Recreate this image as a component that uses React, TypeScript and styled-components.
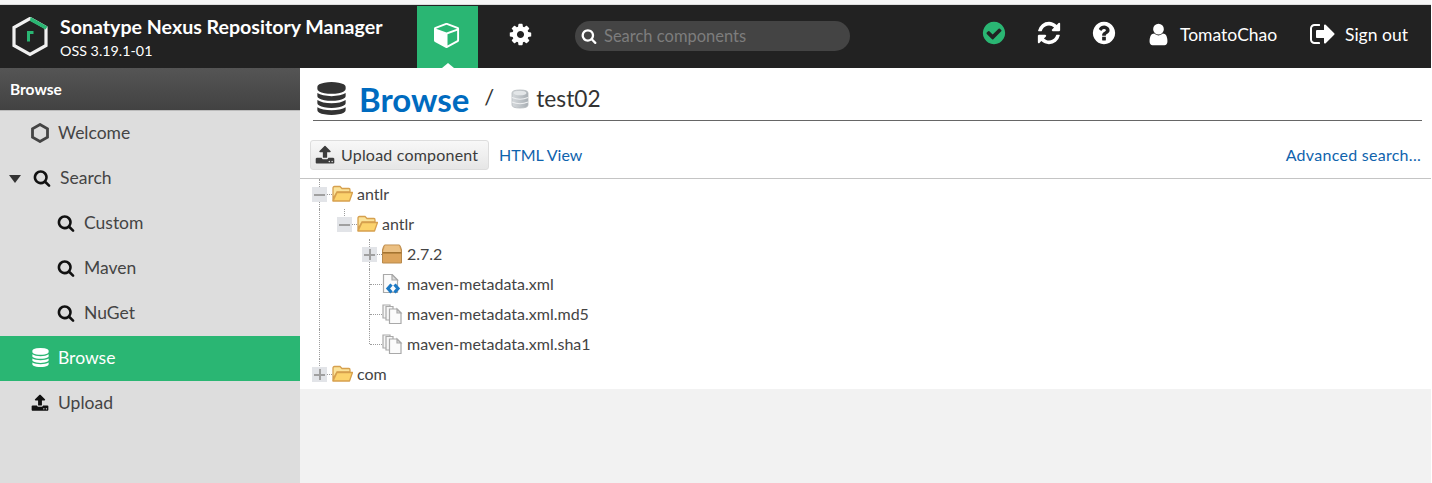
import React from 'react';
import styled, { createGlobalStyle } from 'styled-components';

const GlobalStyle = createGlobalStyle`
  html, body {
    margin: 0;
    padding: 0;
    background: #fff;
    font-family: Lato, "Open Sans", "Liberation Sans", sans-serif;
  }
`;

// glyph outlines of the icon font used by the original page
const paths = {
  search:
    'M1216 832q0-185-131.500-316.500t-316.500-131.500-316.500 131.500-131.500 316.500 131.500 316.500 316.500 131.500 316.500-131.500 131.500-316.500zm512 832q0 52-38 90t-90 38q-54 0-90-38l-343-342q-179 124-399 124-143 0-273.500-55.500t-225-150-150-225-55.500-273.500 55.500-273.500 150-225 225-150 273.500-55.500 273.500 55.500 225 150 150 225 55.500 273.500q0 220-124 399l343 343q37 37 37 90z',
  database:
    'M896 768q237 0 443-43t325-127v170q0 69-103 128t-280 93.500-385 34.500-385-34.500-280-93.500-103-128v-170q119 84 325 127t443 43zm0 768q237 0 443-43t325-127v170q0 69-103 128t-280 93.500-385 34.500-385-34.500-280-93.500-103-128v-170q119 84 325 127t443 43zm0-384q237 0 443-43t325-127v170q0 69-103 128t-280 93.500-385 34.500-385-34.500-280-93.500-103-128v-170q119 84 325 127t443 43zm0-1152q208 0 385 34.500t280 93.500 103 128v128q0 69-103 128t-280 93.500-385 34.500-385-34.500-280-93.500-103-128v-128q0-69 103-128t280-93.500 385-34.500z',
  upload:
    'M1344 1472q0-26-19-45t-45-19-45 19-19 45 19 45 45 19 45-19 19-45zm256 0q0-26-19-45t-45-19-45 19-19 45 19 45 45 19 45-19 19-45zm128-224v320q0 40-28 68t-68 28h-1472q-40 0-68-28t-28-68v-320q0-40 28-68t68-28h427q21 56 70.500 92t110.500 36h256q61 0 110.500-36t70.500-92h427q40 0 68 28t28 68zm-325-648q-17 40-59 40h-256v448q0 26-19 45t-45 19h-256q-26 0-45-19t-19-45v-448h-256q-42 0-59-40-17-39 14-69l448-448q18-19 45-19t45 19l448 448q31 30 14 69z',
  cube:
    'M896 1629l640-349v-636l-640 233v752zm-64-865l698-254-698-254-698 254zm832-252v768q0 35-18 65t-49 47l-704 384q-28 16-61 16t-61-16l-704-384q-31-17-49-47t-18-65v-768q0-40 23-73t61-47l704-256q22-8 44-8t44 8l704 256q38 14 61 47t23 73z',
  cog:
    'M1152 896q0-106-75-181t-181-75-181 75-75 181 75 181 181 75 181-75 75-181zm512-109v222q0 12-8 23t-20 13l-185 28q-19 54-39 91 35 50 107 138 10 12 10 25t-9 23q-27 37-99 108t-94 71q-12 0-26-9l-138-108q-44 23-91 38-16 136-29 186-7 28-36 28h-222q-14 0-24.500-8.500t-11.500-21.500l-28-184q-49-16-90-37l-141 107q-10 9-25 9-14 0-25-11-126-114-165-168-7-10-7-23 0-12 8-23 15-21 51-66.500t54-70.500q-27-50-41-99l-183-27q-13-2-21-12.500t-8-23.500v-222q0-12 8-23t19-13l186-28q14-46 39-92-40-57-107-138-10-12-10-24 0-10 9-23 26-36 98.500-107.500t94.500-71.500q13 0 26 10l138 107q44-23 91-38 16-136 29-186 7-28 36-28h222q14 0 24.500 8.500t11.500 21.500l28 184q49 16 90 37l142-107q9-9 24-9 13 0 25 10 129 119 165 170 7 8 7 22 0 12-8 23-15 21-51 66.500t-54 70.500q26 50 41 98l183 28q13 2 21 12.500t8 23.500z',
  check:
    'M1412 734q0-28-18-46l-91-90q-19-19-45-19t-45 19l-408 407-226-226q-19-19-45-19t-45 19l-91 90q-18 18-18 46 0 27 18 45l362 362q19 19 45 19 27 0 46-19l543-543q18-18 18-45zm252 162q0 209-103 385.500t-279.500 279.500-385.500 103-385.500-103-279.500-279.500-103-385.500 103-385.500 279.500-279.500 385.500-103 385.500 103 279.500 279.500 103 385.500z',
  refresh:
    'M1639 1056q0 5-1 7-64 268-268 434.500t-478 166.500q-146 0-282.500-55t-243.500-157l-129 129q-19 19-45 19t-45-19-19-45v-448q0-26 19-45t45-19h448q26 0 45 19t19 45-19 45l-137 137q71 66 161 102t187 36q134 0 250-65t186-179q11-17 53-117 8-23 30-23h192q13 0 22.500 9.500t9.500 22.500zm25-800v448q0 26-19 45t-45 19h-448q-26 0-45-19t-19-45 19-45l138-138q-148-137-349-137-134 0-250 65t-186 179q-11 17-53 117-8 23-30 23h-199q-13 0-22.500-9.500t-9.500-22.500v-7q65-268 270-434.500t480-166.500q146 0 284 55.500t245 156.500l130-129q19-19 45-19t45 19 19 45z',
  question:
    'M1024 1376v-192q0-14-9-23t-23-9h-192q-14 0-23 9t-9 23v192q0 14 9 23t23 9h192q14 0 23-9t9-23zm256-672q0-88-55.500-163t-138.500-116-170-41q-243 0-371 213-15 24 8 42l132 100q7 6 19 6 16 0 25-12 53-68 86-92 34-24 86-24 48 0 85.500 26t37.500 59q0 38-20 61t-68 45q-63 28-115.500 86.500t-52.500 125.500v36q0 14 9 23t23 9h192q14 0 23-9t9-23q0-19 21.500-49.500t54.500-49.500q32-18 49-28.500t46-35 44.500-48 28-60.500 12.500-81zm384 192q0 209-103 385.500t-279.500 279.500-385.500 103-385.500-103-279.500-279.500-103-385.500 103-385.500 279.500-279.500 385.500-103 385.500 103 279.500 279.500 103 385.500z',
  user:
    'M1536 1399q0 109-62.500 187t-150.500 78h-854q-88 0-150.500-78t-62.500-187q0-85 8.500-160.500t31.500-152 58.500-131 94-89 134.500-34.500q131 128 313 128t313-128q76 0 134.500 34.500t94 89 58.500 131 31.500 152 8.500 160.500zm-256-887q0 159-112.500 271.500t-271.500 112.500-271.500-112.500-112.500-271.500 112.500-271.500 271.500-112.500 271.500 112.500 112.500 271.500z',
  signOut:
    'M704 1440q0 4 1 20t.5 26.500-3 23.500-10 19.500-20.500 6.500h-320q-119 0-203.500-84.500t-84.500-203.500v-704q0-119 84.500-203.500t203.500-84.500h320q13 0 22.500 9.500t9.500 22.500q0 4 1 20t.5 26.500-3 23.500-10 19.500-20.500 6.500h-320q-66 0-113 47t-47 113v704q0 66 47 113t113 47h288l11.500 1 11.500 3 8 5.500 7 9 2 13.500zm928-544q0 26-19 45l-544 544q-19 19-45 19t-45-19-19-45v-288h-448q-26 0-45-19t-19-45v-384q0-26 19-45t45-19h448v-288q0-26 19-45t45-19 45 19l544 544q19 19 19 45z',
};

const Glyph = ({ name, size }: { name: keyof typeof paths; size: number }) => (
  <svg width={size} height={size} viewBox="0 0 1792 1792" fill="currentColor" style={{ flexShrink: 0 }}>
    <path d={paths[name]} />
  </svg>
);

const Page = styled.div`
  width: 1431px;
  height: 483px;
  display: flex;
  flex-direction: column;
  overflow: hidden;
`;

const TopStrip = styled.div`
  height: 5px;
  box-sizing: border-box;
  background: #f6f6f6;
  border-bottom: 1px solid #dddddd;
`;

const Header = styled.header`
  height: 63px;
  background: #222222;
  display: flex;
  align-items: stretch;
  color: #fff;
`;

const Brand = styled.div`
  width: 417px;
  display: flex;
  align-items: center;
  padding-left: 11px;
  box-sizing: border-box;
  gap: 11px;
`;

const BrandText = styled.div`
  display: flex;
  flex-direction: column;
  gap: 4px;
`;

const BrandTitle = styled.div`
  font-size: 19.6px;
  line-height: 24px;
  font-weight: 700;
  white-space: nowrap;
`;

const BrandVersion = styled.div`
  font-size: 14.3px;
  line-height: 16px;
`;

const TabButton = styled.div<{ $active?: boolean; $width: number }>`
  position: relative;
  width: ${(p) => p.$width}px;
  margin-top: 1px;
  display: flex;
  align-items: center;
  justify-content: center;
  padding-bottom: 5px;
  box-sizing: border-box;
  background: ${(p) => (p.$active ? '#2ab673' : 'transparent')};
  ${(p) =>
    p.$active &&
    `&::after {
      content: '';
      position: absolute;
      left: 50%;
      bottom: 0;
      margin-left: -6px;
      border-left: 6px solid transparent;
      border-right: 6px solid transparent;
      border-bottom: 5px solid #fff;
    }`}
`;

const SearchBox = styled.div`
  width: 275px;
  height: 30px;
  margin: 16px 0 0 13px;
  border-radius: 15px;
  background: #444444;
  display: flex;
  align-items: center;
  gap: 7px;
  padding-left: 6px;
  box-sizing: border-box;
  color: #fff;
`;

const SearchPlaceholder = styled.span`
  font-size: 16.5px;
  color: #7d7d7d;
`;

const HeaderRight = styled.div`
  margin-left: auto;
  display: flex;
  align-items: center;
  padding: 0 22px 5px 0;
  font-size: 17.5px;
`;

const HeaderIcon = styled.span<{ $color?: string }>`
  width: 55px;
  margin-bottom: 2px;
  display: flex;
  justify-content: center;
  color: ${(p) => p.$color ?? '#fff'};
`;

const HeaderLink = styled.span<{ $width: number; $gap: number; $offset?: number }>`
  width: ${(p) => p.$width}px;
  margin-left: ${(p) => p.$offset ?? 0}px;
  display: flex;
  align-items: center;
  gap: ${(p) => p.$gap}px;
  white-space: nowrap;
`;

const Body = styled.div`
  flex: 1;
  display: flex;
  min-height: 0;
`;

const Sidebar = styled.aside`
  width: 300px;
  background: #dddddd;
  flex-shrink: 0;
`;

const SidebarTitle = styled.div`
  height: 43px;
  box-sizing: border-box;
  background: linear-gradient(#555555, #424242);
  border-bottom: 1px solid #bbbbbb;
  color: #fff;
  font-size: 15.5px;
  font-weight: 700;
  display: flex;
  align-items: center;
  padding-left: 10px;
`;

const NavItem = styled.div<{ $indent: number; $active?: boolean }>`
  height: 45px;
  box-sizing: border-box;
  display: flex;
  align-items: center;
  padding: 0 0 2px ${(p) => p.$indent}px;
  font-size: 17.5px;
  color: ${(p) => (p.$active ? '#fff' : '#444')};
  background: ${(p) => (p.$active ? '#2ab673' : 'transparent')};
`;

const NavIcon = styled.span<{ $color?: string }>`
  width: 27px;
  display: flex;
  color: ${(p) => p.$color ?? '#111'};
`;

const Caret = styled.span`
  width: 0;
  height: 0;
  margin: 2px 12px 0 0;
  border-left: 6px solid transparent;
  border-right: 6px solid transparent;
  border-top: 8px solid #333;
`;

const Main = styled.main`
  flex: 1;
  display: flex;
  flex-direction: column;
  min-width: 0;
`;

const TitleBar = styled.div`
  background: #fff;
  height: 53px;
  padding: 0 9px 0 13px;
  display: flex;
`;

const TitleInner = styled.div`
  flex: 1;
  display: flex;
  align-items: center;
  box-sizing: border-box;
  padding: 9px 0 0 2px;
  border-bottom: 1px solid #666;
  color: #333;
`;

const TitleText = styled.h1`
  margin: 0 0 0 11px;
  font-size: 33px;
  font-weight: 700;
  color: #006bbf;
`;

const Slash = styled.span`
  margin: 0 17px 4px 15px;
  font-size: 22px;
  color: #333;
`;

const Crumb = styled.span`
  margin-left: 7px;
  font-size: 22.7px;
  color: #333;
`;

const Toolbar = styled.div`
  background: #fff;
  height: 58px;
  box-sizing: border-box;
  border-bottom: 1px solid #c4c4c4;
  padding: 10px 10px 0;
  display: flex;
  align-items: center;
`;

const ToolButton = styled.div`
  height: 30px;
  width: 179px;
  box-sizing: border-box;
  border: 1px solid #dddddd;
  border-radius: 3px;
  background: linear-gradient(#f8f8f8, #e6e6e6);
  display: flex;
  align-items: center;
  padding-left: 4px;
  gap: 6px;
  font-size: 16px;
  letter-spacing: 0.2px;
  color: #3c3c3c;
`;

const ToolLink = styled.a<{ $right?: boolean }>`
  font-size: 16px;
  color: #0f63ad;
  margin-left: ${(p) => (p.$right ? 'auto' : '10px')};
  letter-spacing: ${(p) => (p.$right ? '0.28px' : '0')};
`;

const Tree = styled.div`
  background: #fff;
  display: flex;
  flex-direction: column;
`;

const TreeRow = styled.div`
  height: 30px;
  display: flex;
  align-items: center;
  padding-left: 7px;
  font-size: 16px;
  color: #444;
`;

const TreeLabel = styled.span`
  margin-bottom: 2px;
`;

const lineColor = '#9c9c9c';

const Elbow = styled.span<{ $kind: 'blank' | 'line' | 'tee' | 'end' }>`
  position: relative;
  width: 25px;
  height: 30px;
  flex-shrink: 0;
  ${(p) =>
    p.$kind !== 'blank' &&
    `&::before {
      content: '';
      position: absolute;
      left: 12px;
      top: 0;
      height: ${p.$kind === 'end' ? '15px' : '30px'};
      border-left: 1px dotted ${lineColor};
    }`}
  ${(p) =>
    (p.$kind === 'tee' || p.$kind === 'end') &&
    `&::after {
      content: '';
      position: absolute;
      left: 13px;
      top: 15px;
      width: 12px;
      border-top: 1px dotted ${lineColor};
    }`}
`;

const Expander = styled.span<{ $open: boolean }>`
  position: absolute;
  z-index: 1;
  left: 5px;
  top: 8px;
  width: 15px;
  height: 15px;
  background: #e2e4e8;
  &::before {
    content: '';
    position: absolute;
    left: 2px;
    top: 6.5px;
    width: 11px;
    height: 2px;
    background: #a0a0a0;
  }
  ${(p) =>
    !p.$open &&
    `&::after {
      content: '';
      position: absolute;
      left: 6.5px;
      top: 2px;
      width: 2px;
      height: 11px;
      background: #a0a0a0;
    }`}
`;

const RowIcon = styled.span`
  width: 25px;
  height: 22px;
  flex-shrink: 0;
  display: flex;
  align-items: center;
`;

const Spacer = styled.div`
  flex: 1;
  background: #f2f2f2;
`;

const LogoIcon = () => (
  <svg width="38" height="40" viewBox="0 0 38 40">
    <path d="M19 1.5 L35 10.5 V28.500 L19 37.500 L3 28.500 V10.500 Z" fill="none" stroke="#f0f0f0" strokeWidth="3.2" />
    <path d="M19.500 0 L36.500 9.500 L34.500 12.500 L19 4 Z" fill="#2ab673" />
    <path d="M16 24.500 V14 H22.500 V17 H19 V24.500 Z" fill="#2ab673" />
  </svg>
);

const HexIcon = () => (
  <svg width="18" height="20" viewBox="0 0 18 20">
    <path d="M9 1.500 L16.500 5.700 V14.300 L9 18.500 L1.500 14.300 V5.700 Z" fill="none" stroke="#444" strokeWidth="2.800" />
  </svg>
);

const FolderIcon = () => (
  <svg width="21" height="18" viewBox="0 0 21 18">
    <path d="M1 3 Q1 1.500 2.500 1.500 H8 L10 3.500 H17 Q18 3.500 18 5 V7 H5 L1 14 Z" fill="#fbe39a" stroke="#d6a04e" strokeWidth="1.300" />
    <path d="M1 16 L5 7.500 H20.500 L17.500 16 Z" fill="#fcd36c" stroke="#d6a04e" strokeWidth="1.300" strokeLinejoin="round" />
  </svg>
);

const BoxIcon = () => (
  <svg width="20" height="20" viewBox="0 0 20 20">
    <path d="M3 1 H17 Q18 1 18.500 2.500 L19.500 6 V19 H0.500 V6 L1.500 2.500 Q2 1 3 1 Z" fill="#dca45c" stroke="#b98a4c" />
    <path d="M3 1.500 H17 L19 8 H1 Z" fill="#ebc083" />
    <path d="M0.500 8.800 H19.500" stroke="#a0712f" strokeWidth="1.500" />
  </svg>
);

const XmlIcon = () => (
  <svg width="21" height="20" viewBox="0 0 21 20">
    <path d="M1.500 0.500 H10 L15.500 6 V18.500 H1.500 Z" fill="#fbfbfb" stroke="#a9a9a9" strokeWidth="1.200" />
    <path d="M10 0.500 V6 H15.500 Z" fill="#dcdcdc" stroke="#a9a9a9" strokeWidth="1.200" />
    <path d="M9.500 10.500 L6 14.500 L9.500 18.500 M12.500 10.500 L16 14.500 L12.500 18.500" fill="none" stroke="#1c79c4" strokeWidth="3.200" />
  </svg>
);

const FilesIcon = () => (
  <svg width="21" height="20" viewBox="0 0 21 20">
    <path d="M1 1 H8 V14 H1 Z" fill="#f6f6f6" stroke="#a9a9a9" strokeWidth="1.200" />
    <path d="M4 2.500 H11 V16 H4 Z" fill="#f6f6f6" stroke="#a9a9a9" strokeWidth="1.200" />
    <path d="M7.500 5 H15 L19 9 V19.500 H7.500 Z" fill="#fbfbfb" stroke="#a9a9a9" strokeWidth="1.200" />
    <path d="M15 5 V9 H19 Z" fill="#dcdcdc" stroke="#a9a9a9" strokeWidth="1.200" />
  </svg>
);

const CrumbIcon = () => (
  <svg width="18" height="20" viewBox="0 0 18 20">
    <defs>
      <linearGradient id="can" x1="0" x2="1" y1="0" y2="0">
        <stop offset="0" stopColor="#d5d9dc" />
        <stop offset="0.5" stopColor="#c0c5c9" />
        <stop offset="1" stopColor="#a9afb4" />
      </linearGradient>
    </defs>
    <path d="M1 4 Q1 1 9 1 Q17 1 17 4 V16 Q17 19 9 19 Q1 19 1 16 Z" fill="url(#can)" stroke="#b4b9bd" strokeWidth="0.800" />
    <ellipse cx="9" cy="4" rx="6.500" ry="2.300" fill="#e3e6e8" />
    <path d="M1 8.500 Q9 12 17 8.500 M1 13 Q9 16.500 17 13" fill="none" stroke="#eef0f1" strokeWidth="1.100" />
  </svg>
);

type ElbowKind = 'blank' | 'line' | 'tee' | 'end';

interface Cell {
  kind: ElbowKind;
  expander?: 'open' | 'closed';
}

const treeRows: { cells: Cell[]; icon: React.ReactNode; label: string }[] = [
  { cells: [{ kind: 'tee', expander: 'open' }], icon: <FolderIcon />, label: 'antlr' },
  { cells: [{ kind: 'line' }, { kind: 'end', expander: 'open' }], icon: <FolderIcon />, label: 'antlr' },
  { cells: [{ kind: 'line' }, { kind: 'blank' }, { kind: 'tee', expander: 'closed' }], icon: <BoxIcon />, label: '2.7.2' },
  { cells: [{ kind: 'line' }, { kind: 'blank' }, { kind: 'tee' }], icon: <XmlIcon />, label: 'maven-metadata.xml' },
  { cells: [{ kind: 'line' }, { kind: 'blank' }, { kind: 'tee' }], icon: <FilesIcon />, label: 'maven-metadata.xml.md5' },
  { cells: [{ kind: 'line' }, { kind: 'blank' }, { kind: 'end' }], icon: <FilesIcon />, label: 'maven-metadata.xml.sha1' },
  { cells: [{ kind: 'end', expander: 'closed' }], icon: <FolderIcon />, label: 'com' },
];

export default function App() {
  return (
    <Page>
      <GlobalStyle />
      <TopStrip />
      <Header>
        <Brand>
          <LogoIcon />
          <BrandText>
            <BrandTitle>Sonatype Nexus Repository Manager</BrandTitle>
            <BrandVersion>OSS 3.19.1-01</BrandVersion>
          </BrandText>
        </Brand>
        <TabButton $active $width={61}>
          <Glyph name="cube" size={27} />
        </TabButton>
        <TabButton $width={84}>
          <Glyph name="cog" size={25} />
        </TabButton>
        <SearchBox>
          <Glyph name="search" size={16} />
          <SearchPlaceholder>Search components</SearchPlaceholder>
        </SearchBox>
        <HeaderRight>
          <HeaderIcon $color="#2ab673"><Glyph name="check" size={26} /></HeaderIcon>
          <HeaderIcon><Glyph name="refresh" size={26} /></HeaderIcon>
          <HeaderIcon><Glyph name="question" size={26} /></HeaderIcon>
          <HeaderLink $width={163} $gap={9} $offset={15}><Glyph name="user" size={25} />TomatoChao</HeaderLink>
          <HeaderLink $width={100} $gap={8}><Glyph name="signOut" size={28} />Sign out</HeaderLink>
        </HeaderRight>
      </Header>
      <Body>
        <Sidebar>
          <SidebarTitle>Browse</SidebarTitle>
          <NavItem $indent={31}><NavIcon><HexIcon /></NavIcon>Welcome</NavItem>
          <NavItem $indent={9}><Caret /><NavIcon><Glyph name="search" size={18} /></NavIcon>Search</NavItem>
          <NavItem $indent={57}><NavIcon><Glyph name="search" size={18} /></NavIcon>Custom</NavItem>
          <NavItem $indent={57}><NavIcon><Glyph name="search" size={18} /></NavIcon>Maven</NavItem>
          <NavItem $indent={57}><NavIcon><Glyph name="search" size={18} /></NavIcon>NuGet</NavItem>
          <NavItem $indent={31} $active><NavIcon $color="#fff"><Glyph name="database" size={19} /></NavIcon>Browse</NavItem>
          <NavItem $indent={31}><NavIcon><Glyph name="upload" size={18} /></NavIcon>Upload</NavItem>
        </Sidebar>
        <Main>
          <TitleBar>
            <TitleInner>
              <Glyph name="database" size={33} />
              <TitleText>Browse</TitleText>
              <Slash>/</Slash>
              <CrumbIcon />
              <Crumb>test02</Crumb>
            </TitleInner>
          </TitleBar>
          <Toolbar>
            <ToolButton><Glyph name="upload" size={20} />Upload component</ToolButton>
            <ToolLink>HTML View</ToolLink>
            <ToolLink $right>Advanced search...</ToolLink>
          </Toolbar>
          <Tree>
            {treeRows.map((row, i) => (
              <TreeRow key={i}>
                {row.cells.map((cell, j) => (
                  <Elbow key={j} $kind={cell.kind}>
                    {cell.expander && <Expander $open={cell.expander === 'open'} />}
                  </Elbow>
                ))}
                <RowIcon>{row.icon}</RowIcon>
                <TreeLabel>{row.label}</TreeLabel>
              </TreeRow>
            ))}
          </Tree>
          <Spacer />
        </Main>
      </Body>
    </Page>
  );
}
